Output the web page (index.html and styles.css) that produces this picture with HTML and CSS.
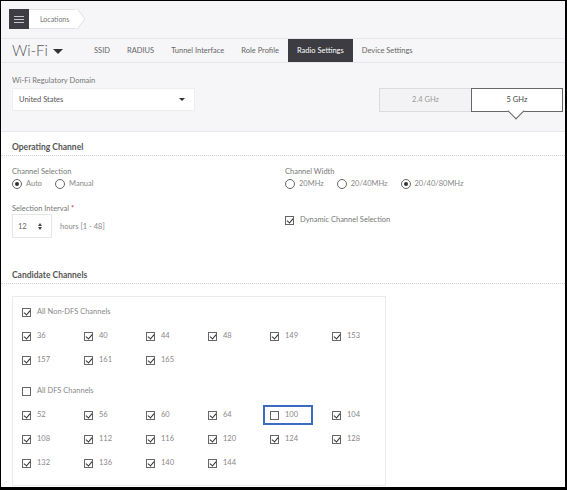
FILE: index.html
```html
<!DOCTYPE html>
<html lang="en">
<head>
  <meta charset="UTF-8">
  <meta name="viewport" content="width=device-width, initial-scale=1.0">
  <title>Radio Settings</title>
  <link rel="stylesheet" href="styles.css">
</head>
<body>
  <div class="page">
    <div class="topbar">
      <div class="menuBtn"><span></span><span></span><span></span></div>
      <div class="crumb">Locations</div>
    </div>

    <div class="navbar">
      <div class="wifiTitle">Wi-Fi <span class="caret big"></span></div>
      <div class="tabs">
        <div class="tab">SSID</div>
        <div class="tab">RADIUS</div>
        <div class="tab">Tunnel Interface</div>
        <div class="tab">Role Profile</div>
        <div class="tab active">Radio Settings</div>
        <div class="tab">Device Settings</div>
      </div>
    </div>

    <div class="domainRow">
      <div class="domainField">
        <div class="label">Wi-Fi Regulatory Domain</div>
        <div class="select">United States <span class="caret"></span></div>
      </div>
      <div class="bands">
        <div class="band">2.4 GHz</div>
        <div class="band selected">5 GHz</div>
      </div>
    </div>

    <div class="sectionTitle">Operating Channel</div>
    <div class="opGrid">
      <div class="field">
        <div class="label">Channel Selection</div>
        <div class="radios">
          <label class="radio on"><i></i>Auto</label>
          <label class="radio"><i></i>Manual</label>
        </div>
      </div>
      <div class="field">
        <div class="label">Channel Width</div>
        <div class="radios">
          <label class="radio"><i></i>20MHz</label>
          <label class="radio"><i></i>20/40MHz</label>
          <label class="radio on"><i></i>20/40/80MHz</label>
        </div>
      </div>
      <div class="field">
        <div class="label">Selection Interval <span class="req">*</span></div>
        <div class="intervalRow">
          <div class="spin">12 <span class="spinArrows"></span></div>
          <span class="hint">hours [1 - 48]</span>
        </div>
      </div>
      <div class="field dynamic">
        <label class="check on"><i></i>Dynamic Channel Selection</label>
      </div>
    </div>

    <div class="sectionTitle candidates">Candidate Channels</div>
    <div class="channelBox">
      <label class="check on groupTitle"><i></i>All Non-DFS Channels</label>
      <div class="channelGrid">
        <label class="check on num"><i></i>36</label>
        <label class="check on num"><i></i>40</label>
        <label class="check on num"><i></i>44</label>
        <label class="check on num"><i></i>48</label>
        <label class="check on num"><i></i>149</label>
        <label class="check on num"><i></i>153</label>
        <label class="check on num"><i></i>157</label>
        <label class="check on num"><i></i>161</label>
        <label class="check on num"><i></i>165</label>
      </div>

      <label class="check groupTitle dfs"><i></i>All DFS Channels</label>
      <div class="channelGrid">
        <label class="check on num"><i></i>52</label>
        <label class="check on num"><i></i>56</label>
        <label class="check on num"><i></i>60</label>
        <label class="check on num"><i></i>64</label>
        <label class="check num focus"><i></i>100</label>
        <label class="check on num"><i></i>104</label>
        <label class="check on num"><i></i>108</label>
        <label class="check on num"><i></i>112</label>
        <label class="check on num"><i></i>116</label>
        <label class="check on num"><i></i>120</label>
        <label class="check on num"><i></i>124</label>
        <label class="check on num"><i></i>128</label>
        <label class="check on num"><i></i>132</label>
        <label class="check on num"><i></i>136</label>
        <label class="check on num"><i></i>140</label>
        <label class="check on num"><i></i>144</label>
      </div>
    </div>
  </div>
</body>
</html>
```

FILE: styles.css
```css
* {
  box-sizing: border-box;
}

body {
  margin: 0;
  background: #000;
  font-family: "Lato", "Open Sans", sans-serif;
  color: #666;
}

.page {
  width: 567px;
  height: 490px;
  border-style: solid;
  border-color: #000;
  border-width: 1px 2px 3px 1px;
  background: #fff;
  overflow: hidden;
}

/* top breadcrumb bar */
.topbar {
  height: 37px;
  background: #f6f6f8;
  display: flex;
  align-items: flex-start;
  padding: 8px 0 0 8px;
}

.menuBtn {
  width: 20px;
  height: 20px;
  background: #3d3d43;
  display: flex;
  flex-direction: column;
  justify-content: center;
  align-items: center;
  gap: 2px;
}

.menuBtn span {
  display: block;
  width: 10px;
  height: 1px;
  background: #c8c8cc;
}

.crumb {
  position: relative;
  height: 20px;
  line-height: 18px;
  padding: 0 8px 0 11px;
  background: #fff;
  border: 1px solid #e2e2e4;
  border-left: none;
  border-right: none;
  font-size: 7px;
  color: #777;
}

.crumb::after {
  content: "";
  position: absolute;
  right: -7px;
  top: 2px;
  width: 13px;
  height: 13px;
  background: #fff;
  border-top: 1px solid #e2e2e4;
  border-right: 1px solid #e2e2e4;
  transform: rotate(45deg) skew(8deg, 8deg);
}

/* wifi + tabs */
.navbar {
  height: 25px;
  background: #f6f6f8;
  border-top: 1px solid #e6e6ea;
  border-bottom: 1px solid #e6e6ea;
  display: flex;
  align-items: stretch;
}

.wifiTitle {
  width: 77px;
  padding-left: 11px;
  font-size: 15px;
  line-height: 23px;
  color: #555;
  font-weight: 300;
  display: flex;
  align-items: center;
  gap: 5px;
}

.caret {
  display: inline-block;
  width: 0;
  height: 0;
  border-left: 3px solid transparent;
  border-right: 3px solid transparent;
  border-top: 3px solid #333;
}

.caret.big {
  border-left-width: 5px;
  border-right-width: 5px;
  border-top-width: 5px;
  margin-top: 2px;
}

.tabs {
  display: flex;
  padding-left: 8px;
}

.tab {
  padding: 0 8px;
  font-size: 7.5px;
  line-height: 23px;
  color: #666;
  margin-right: 1px;
}

.tab.active {
  background: #3c3c42;
  color: #fff;
  padding: 0 9px;
  margin-right: 1px;
}

/* regulatory domain */
.domainRow {
  height: 69px;
  background: #f6f6f8;
  border-bottom: 1px solid #e8e8ea;
  display: flex;
  justify-content: space-between;
  padding: 13px 2px 0 11px;
}

.label {
  font-size: 7.5px;
  line-height: 10px;
  color: #777;
}

.domainField .label {
  margin-bottom: 2px;
}

.select {
  width: 183px;
  height: 23px;
  background: #fff;
  border: 1px solid #eee;
  display: flex;
  align-items: center;
  justify-content: space-between;
  padding: 0 9px 0 6px;
  font-size: 7.5px;
  color: #555;
}

.bands {
  display: flex;
  margin-top: 12px;
  height: 24px;
}

.band {
  width: 92px;
  height: 24px;
  line-height: 22px;
  text-align: center;
  font-size: 7.5px;
  color: #999;
  background: #f3f3f5;
  border: 1px solid #dcdcde;
  border-right: none;
}

.band.selected {
  position: relative;
  background: #fff;
  color: #444;
  border: 1px solid #666;
}

.band.selected::after {
  content: "";
  position: absolute;
  left: 38px;
  bottom: -6px;
  width: 11px;
  height: 11px;
  background: #fff;
  border-right: 1px solid #666;
  border-bottom: 1px solid #666;
  transform: rotate(45deg);
}

/* section headers */
.sectionTitle {
  padding: 9px 11px 1px;
  font-size: 8.5px;
  line-height: 13px;
  font-weight: 700;
  color: #555;
  border-bottom: 1px dotted #cfcfd2;
}

.sectionTitle.candidates {
  margin-top: 22px;
}

.opGrid {
  display: grid;
  grid-template-columns: 273px 1fr;
  padding: 11px 11px 0;
  row-gap: 14px;
}

.radios {
  display: flex;
  gap: 13px;
  margin-top: 1px;
}

.radio, .check {
  display: flex;
  align-items: center;
  font-size: 7.5px;
  line-height: 12px;
  color: #888;
}

.radio i {
  width: 10px;
  height: 10px;
  border: 1px solid #666;
  border-radius: 50%;
  margin-right: 4px;
  position: relative;
}

.radio.on i::after {
  content: "";
  position: absolute;
  left: 2px;
  top: 2px;
  width: 4px;
  height: 4px;
  border-radius: 50%;
  background: #333;
}

.req {
  color: #d33;
}

.intervalRow {
  display: flex;
  align-items: center;
  gap: 8px;
}

.spin {
  width: 40px;
  height: 24px;
  border: 1px solid #e6e6e8;
  display: flex;
  align-items: center;
  justify-content: space-between;
  padding: 0 8px 0 5px;
  font-size: 7.5px;
  color: #666;
}

.spinArrows {
  position: relative;
  width: 5px;
  height: 7px;
}

.spinArrows::before, .spinArrows::after {
  content: "";
  position: absolute;
  left: 0;
  border-left: 2.5px solid transparent;
  border-right: 2.5px solid transparent;
}

.spinArrows::before {
  top: 0;
  border-bottom: 3px solid #444;
}

.spinArrows::after {
  bottom: 0;
  border-top: 3px solid #444;
}

.hint {
  font-size: 7.5px;
  color: #888;
}

.dynamic {
  padding-top: 10px;
}

.dynamic .check {
  color: #777;
}

.check i {
  width: 9px;
  height: 9px;
  border: 1px solid #666;
  margin-right: 6px;
  position: relative;
  flex-shrink: 0;
}

.check.on i::after {
  content: "";
  position: absolute;
  left: 1.5px;
  top: 0.5px;
  width: 3px;
  height: 5px;
  border-right: 1px solid #333;
  border-bottom: 1px solid #333;
  transform: rotate(40deg);
}

/* candidate channels box */
.channelBox {
  width: 374px;
  margin: 12px 0 0 11px;
  border: 1px solid #ebebed;
  padding: 9px 9px 16px;
}

.groupTitle {
  margin-bottom: 12px;
}

.groupTitle.dfs {
  margin-top: 19px;
  margin-bottom: 12px;
}

.channelGrid {
  display: grid;
  grid-template-columns: repeat(6, 62px);
  grid-auto-rows: 12px;
  row-gap: 12px;
}

.num {
  color: #8b8588;
}

.check.focus {
  width: 42px;
  margin-left: -3px;
  padding-left: 3px;
  outline: 2px solid #3c69c2;
  outline-offset: 2px;
}
```
